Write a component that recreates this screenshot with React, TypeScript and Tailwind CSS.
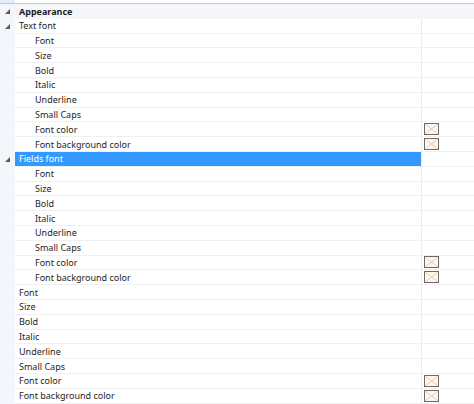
import React from "react";

interface Prop {
  label: string;
  indent?: boolean;
  expander?: boolean;
  selected?: boolean;
  color?: boolean;
}

const fontChildren = (indent: boolean): Prop[] => [
  { label: "Font", indent },
  { label: "Size", indent },
  { label: "Bold", indent },
  { label: "Italic", indent },
  { label: "Underline", indent },
  { label: "Small Caps", indent },
  { label: "Font color", indent, color: true },
  { label: "Font background color", indent, color: true },
];

const rows: Prop[] = [
  { label: "Text font", expander: true },
  ...fontChildren(true),
  { label: "Fields font", expander: true, selected: true },
  ...fontChildren(true),
  ...fontChildren(false),
];

function Expander() {
  return (
    <svg width="5" height="5" viewBox="0 0 5 5" className="block">
      <polygon points="5,0 5,5 0,5" fill="#595959" />
    </svg>
  );
}

function Swatch() {
  return (
    <div className="w-[15px] h-[12px] border border-[#6b6b6b] bg-[#fbf7f2] flex items-center justify-center">
      <svg width="13" height="10" viewBox="0 0 13 10" className="block">
        <line x1="0.5" y1="0.5" x2="12.5" y2="9.5" stroke="#f2c9a0" strokeWidth="1" />
        <line x1="12.5" y1="0.5" x2="0.5" y2="9.5" stroke="#f2c9a0" strokeWidth="1" />
      </svg>
    </div>
  );
}

function Row({ p }: { p: Prop }) {
  return (
    <div className="flex h-[14.8px]">
      <div className="w-[15px] shrink-0 bg-[#f3f7fc] flex items-center justify-center">
        {p.expander && <Expander />}
      </div>
      <div
        className={`w-[406px] shrink-0 flex items-center border-b border-[#f0f0f0] ${
          p.selected ? "bg-[#3399ff] text-white" : "text-[#1e1e1e]"
        } ${p.indent ? "pl-[20px]" : "pl-[4px]"}`}
      >
        {p.label}
      </div>
      <div className="flex-1 flex items-center pl-[2px] border-l border-[#ececec] border-b border-b-[#f0f0f0]">
        {p.color && <Swatch />}
      </div>
    </div>
  );
}

export default function App() {
  return (
    <div
      className="w-[474px] h-[404px] overflow-hidden bg-white text-[9px] leading-none"
      style={{ fontFamily: '"Noto Sans", "Open Sans", sans-serif' }}
    >
      <div className="flex h-[3px]">
        <div className="w-[15px] bg-[#e4eefa]" />
        <div className="flex-1 bg-white" />
      </div>
      <div className="h-px bg-[#c8c8c8]" />
      <div className="flex h-[14.8px] bg-[#f4f6fa]">
        <div className="w-[15px] shrink-0 flex items-center justify-center">
          <Expander />
        </div>
        <div className="flex items-center pl-[4px] font-bold text-[#1e1e1e]">Appearance</div>
      </div>
      {rows.map((p, i) => (
        <Row key={i} p={p} />
      ))}
    </div>
  );
}
